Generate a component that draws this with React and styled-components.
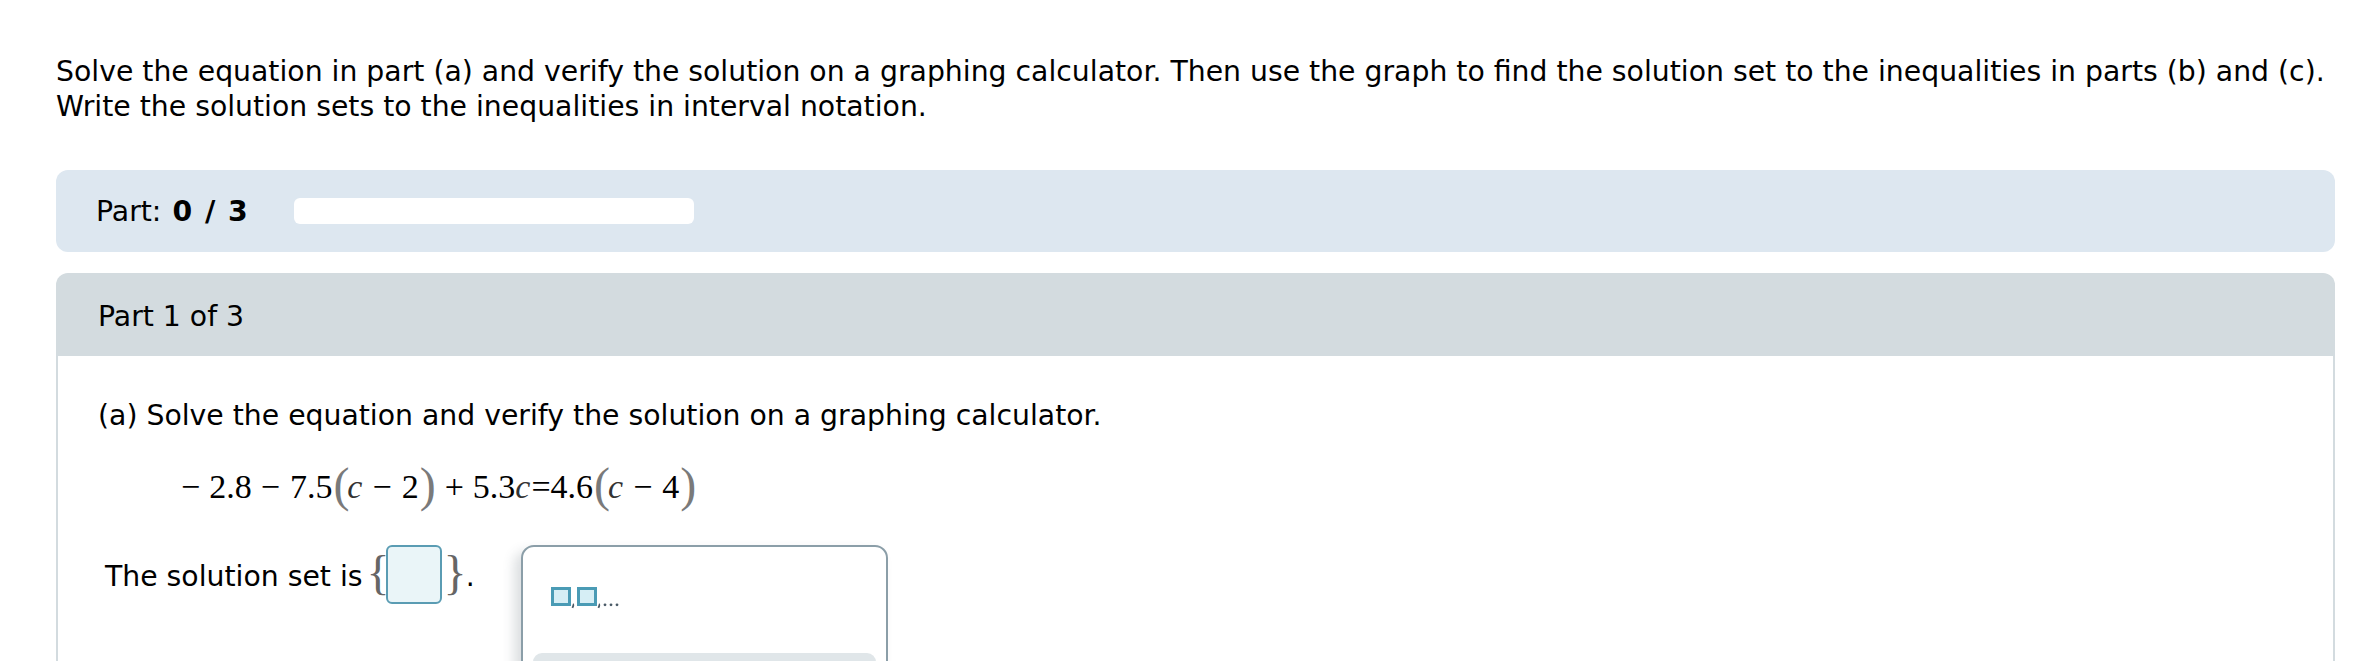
import React from "react";
import styled, { createGlobalStyle } from "styled-components";

const GlobalStyles = createGlobalStyle`
  html, body {
    margin: 0;
    padding: 0;
    background: #fff;
  }
  body {
    font-family: "DejaVu Sans", Verdana, sans-serif;
    font-size: 28.3px;
    color: #000;
  }
`;

const Page = styled.div`
  padding: 54px 29px 0 56px;
`;

const Intro = styled.p`
  margin: 0;
  line-height: 35px;
`;

const ProgressPanel = styled.div`
  margin-top: 46px;
  height: 82px;
  display: flex;
  align-items: center;
  padding-left: 40px;
  background: #dde7f0;
  border-radius: 12px;
`;

const Bold = styled.b`
  font-weight: 700;
  word-spacing: 3px;
  margin-left: 2px;
`;

const ProgressBar = styled.div`
  margin-left: 46px;
  width: 400px;
  height: 26px;
  background: #fff;
  border-radius: 6px;
`;

const Card = styled.section`
  margin-top: 21px;
  border-radius: 12px 12px 0 0;
  overflow: hidden;
`;

const CardHeader = styled.div`
  height: 83px;
  display: flex;
  align-items: center;
  padding: 3px 0 0 42px;
  box-sizing: border-box;
  background: #d3dbdf;
`;

const CardBody = styled.div`
  border: 2px solid #d3dbdf;
  border-top: none;
  padding: 42px 40px 120px;
`;

const Question = styled.div`
  line-height: 35px;
`;

const Equation = styled.div`
  margin: 30px 0 0 83px;
  font-family: "Liberation Serif", "Times New Roman", serif;
  font-size: 34px;
  display: flex;
  align-items: center;
  height: 48px;
`;

const Op = styled.span`
  margin: 0 ${({ $r }) => $r}px 0 ${({ $l }) => $l}px;
`;

const Var = styled.i`
  color: #333;
  font-style: italic;
  margin-right: 1px;
`;

const Paren = styled.span`
  font-size: 48px;
  font-weight: 300;
  color: #7a7a7a;
  display: inline-block;
  position: relative;
  top: -3px;
  margin: ${({ $open }) => ($open ? "0 -2px 0 1px" : "0 2px 0 1px")};
`;

const AnswerRow = styled.div`
  margin-top: 34px;
  display: flex;
  align-items: flex-start;
`;

const Label = styled.span`
  margin: 14px 0 0 7px;
  line-height: 35px;
`;

const Brace = styled.span`
  font-family: "Liberation Serif", "Times New Roman", serif;
  font-size: 48px;
  line-height: 59px;
  color: #666;
  margin: -2px ${({ $left }) => ($left ? "-4px 0 4px" : "-1px 0 2px")};
`;

const Period = styled.span`
  margin-top: 14px;
  line-height: 35px;
`;

const AnswerBox = styled.div`
  width: 52px;
  height: 55px;
  border: 2px solid #5a9cb3;
  border-radius: 6px;
  background: #eaf5f8;
`;

const Keypad = styled.div`
  margin-left: 46px;
  width: 367px;
  box-sizing: border-box;
  border: 2px solid #8b9ea8;
  border-radius: 13px;
  background: #fff;
  box-shadow: -7px 6px 12px rgba(60, 80, 90, 0.18);
  padding: 38px 10px 0 10px;
`;

const KeyIcon = styled.div`
  padding-left: 18px;
  height: 24px;
`;

const KeyButton = styled.div`
  margin-top: 44px;
  height: 70px;
  border-radius: 9px;
  background: #e0e6e9;
`;

function ListIcon() {
  return (
    <svg width="74" height="24" viewBox="0 0 74 24">
      <rect x="1.5" y="1.5" width="17" height="16" fill="#d6eef5" stroke="#4a9bb5" strokeWidth="3" />
      <path d="M21.8 17.2 q1.2 0.4 -0.4 3.6" stroke="#4a5a66" strokeWidth="1.8" fill="none" />
      <rect x="27.5" y="1.5" width="17" height="16" fill="#d6eef5" stroke="#4a9bb5" strokeWidth="3" />
      <path d="M47.8 17.2 q1.2 0.4 -0.4 3.6" stroke="#4a5a66" strokeWidth="1.8" fill="none" />
      <circle cx="54" cy="17.8" r="1.4" fill="#4a5a66" />
      <circle cx="60" cy="17.8" r="1.4" fill="#4a5a66" />
      <circle cx="66" cy="17.8" r="1.4" fill="#4a5a66" />
    </svg>
  );
}

export default function App() {
  return (
    <>
      <GlobalStyles />
      <Page>
        <Intro>
          Solve the equation in part (a) and verify the solution on a graphing calculator. Then use the graph to find the solution set to the inequalities in parts (b) and (c).
          <br />
          Write the solution sets to the inequalities in interval notation.
        </Intro>

        <ProgressPanel>
          <span>
            Part: <Bold>0 / 3</Bold>
          </span>
          <ProgressBar />
        </ProgressPanel>

        <Card>
          <CardHeader>Part 1 of 3</CardHeader>
          <CardBody>
            <Question>(a) Solve the equation and verify the solution on a graphing calculator.</Question>
            <Equation>
              <Op $l={0} $r={9}>−</Op>2.8<Op $l={9} $r={10}>−</Op>7.5<Paren $open>(</Paren>
              <Var>c</Var>
              <Op $l={9} $r={10}>−</Op>2<Paren>)</Paren>
              <Op $l={7} $r={9}>+</Op>5.3<Var>c</Var>
              <Op $l={0} $r={0}>=</Op>4.6<Paren $open>(</Paren>
              <Var>c</Var>
              <Op $l={9} $r={10}>−</Op>4<Paren>)</Paren>
            </Equation>
            <AnswerRow>
              <Label>The solution set is</Label>
              <Brace $left>{"{"}</Brace>
              <AnswerBox />
              <Brace>{"}"}</Brace>
              <Period>.</Period>
              <Keypad>
                <KeyIcon>
                  <ListIcon />
                </KeyIcon>
                <KeyButton />
              </Keypad>
            </AnswerRow>
          </CardBody>
        </Card>
      </Page>
    </>
  );
}
